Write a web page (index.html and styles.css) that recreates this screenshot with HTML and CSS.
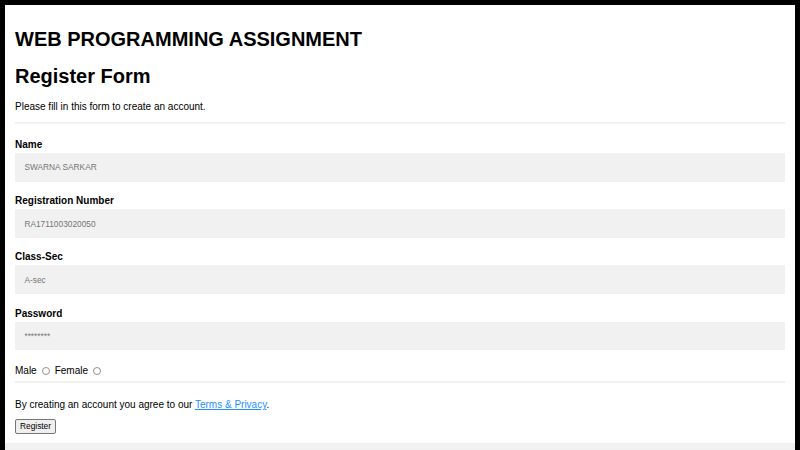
FILE: index.html
```html
<!DOCTYPE html>
<html>
<head>
<meta charset="utf-8">
<title>Register Form</title>
<link rel="stylesheet" href="styles.css">
</head>
<body>
<form class="form">
  <div class="container">
    <h1 class="title">WEB PROGRAMMING ASSIGNMENT</h1>
    <h1 class="title">Register Form</h1>
    <p class="intro">Please fill in this form to create an account.</p>
    <hr class="rule">

    <label class="label" for="name"><b>Name</b></label>
    <input class="field" type="text" id="name" placeholder="SWARNA SARKAR">

    <label class="label" for="reg"><b>Registration Number</b></label>
    <input class="field" type="text" id="reg" placeholder="RA1711003020050">

    <label class="label" for="cls"><b>Class-Sec</b></label>
    <input class="field" type="text" id="cls" placeholder="A-sec">

    <label class="label" for="psw"><b>Password</b></label>
    <input class="field" type="password" id="psw" placeholder="********">

    <div class="gender">Male <input class="radio" type="radio" name="g"> Female <input class="radio" type="radio" name="g"></div>
    <hr class="rule rule-tight">

    <p class="terms">By creating an account you agree to our <a class="link" href="#">Terms &amp; Privacy</a>.</p>
    <button type="button" class="btn">Register</button>
  </div>
  <div class="signin"></div>
</form>
</body>
</html>
```
FILE: styles.css
```css
* { box-sizing: border-box; }
html, body { background: #000; }
body {
  margin: 5px;
  font-family: "Liberation Sans", Arial, sans-serif;
  font-size: 10px;
  color: #000;
}
.container {
  background: #fff;
  padding: 10px 10px 9px;
}
.title {
  font-size: 20px;
  font-weight: bold;
  margin: 13.4px 0;
}
.intro {
  margin: 10px 0;
}
.terms {
  margin: 10px 0 9px;
}
.rule {
  border: 0.625px solid #f1f1f1;
  margin: 5px 0 14.6px;
}
.rule-tight {
  margin-top: 5px;
  margin-bottom: 15.6px;
}
.label {
  display: inline;
}
.field {
  display: inline-block;
  width: 100%;
  padding: 9.4px;
  margin: 3.1px 0 13.4px 0;
  border: none;
  background: #f1f1f1;
  font-family: "Liberation Sans", Arial, sans-serif;
  font-size: 8.33px;
  outline: none;
}
.field::placeholder { color: #757575; }
.gender {
  display: flex;
  align-items: center;
  gap: 3px;
  margin-top: 1px;
  line-height: 11.5px;
}
.radio {
  width: 8px;
  height: 8px;
  margin: 0 2px;
  opacity: 0.8;
}
.link { color: dodgerblue; }
.btn {
  display: block;
  font-family: "Liberation Sans", Arial, sans-serif;
  font-size: 8.33px;
  padding: 1.5px 4px;
  border: 1px solid #767676;
  border-radius: 2px;
  background: #efefef;
  color: #000;
}
.signin {
  background: #f1f1f1;
  height: 40px;
}
```
